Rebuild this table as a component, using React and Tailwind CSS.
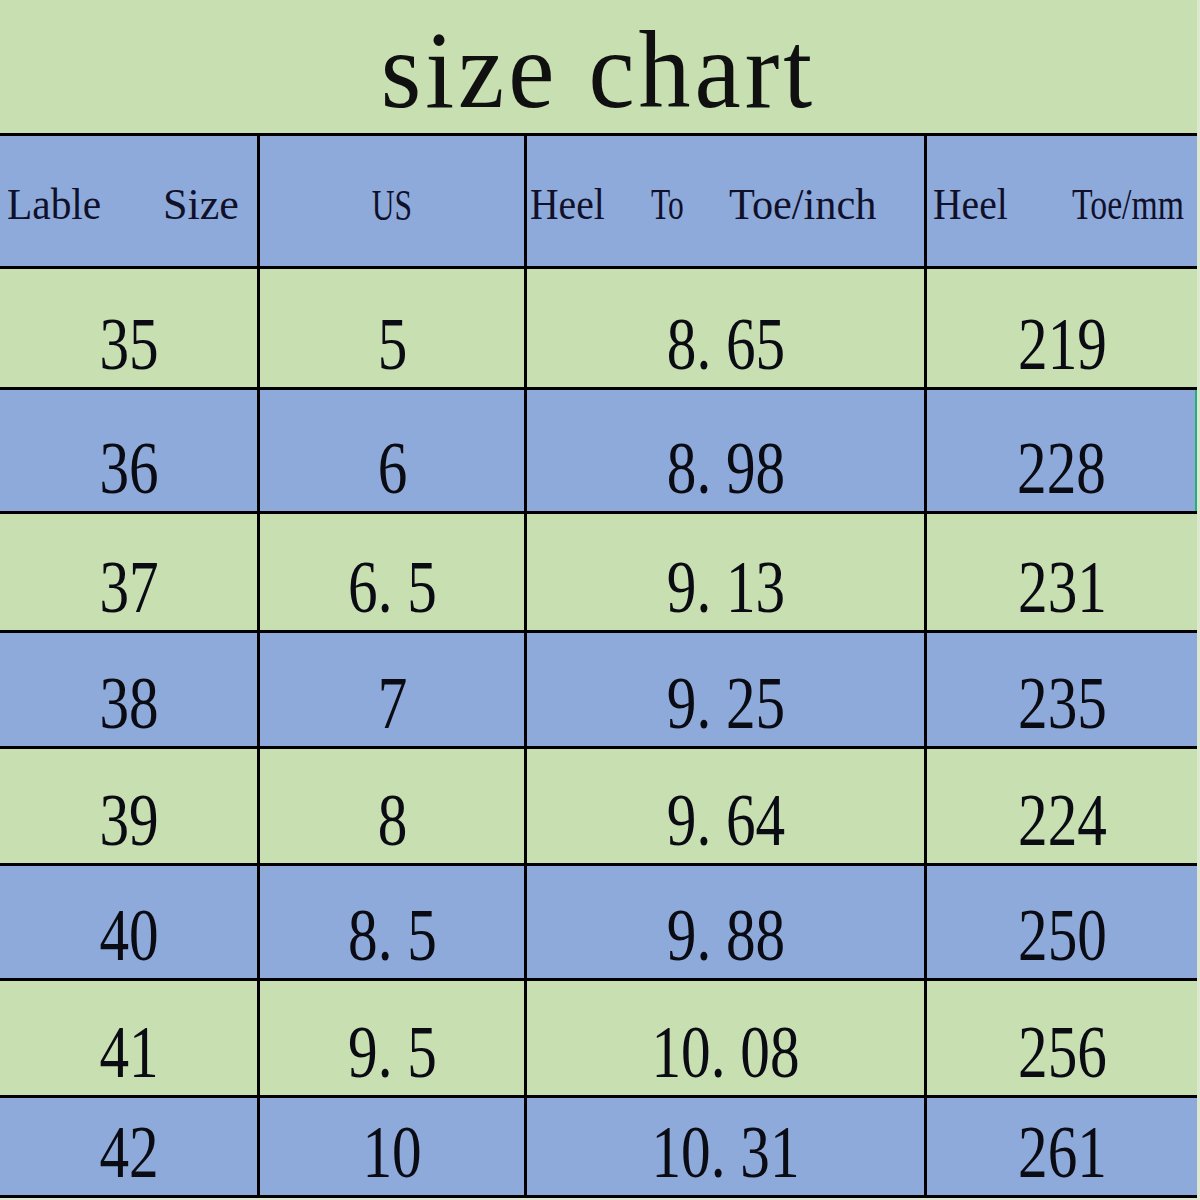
import React from "react";

const rows = [
  ["35", "5", "8.65", "219", 121],
  ["36", "6", "8.98", "228", 124],
  ["37", "6.5", "9.13", "231", 119],
  ["38", "7", "9.25", "235", 116],
  ["39", "8", "9.64", "224", 117],
  ["40", "8.5", "9.88", "250", 115],
  ["41", "9.5", "10.08", "256", 117],
  ["42", "10", "10.31", "261", 100],
];

const serif = { fontFamily: '"Liberation Serif", "Times New Roman", serif' };

function Num({ value }) {
  const parts = value.split(".");
  return (
    <span className="inline-block leading-none text-[74px] scale-x-[0.8] text-[#0b0b14]" style={serif}>
      {parts[0]}
      {parts.length > 1 && (
        <>
          <span className="inline-block w-[0.5em]">.</span>
          {parts[1]}
        </>
      )}
    </span>
  );
}

function Word({ children, w, s }) {
  return (
    <span className={"inline-block shrink-0 " + (w || "")}>
      <span className={"inline-block origin-left leading-none whitespace-nowrap " + (s || "scale-x-[0.9]")}>{children}</span>
    </span>
  );
}

export default function App() {
  return (
    <div className="w-[1200px] h-[1200px] bg-[#dce8d0] overflow-hidden" style={serif}>
      <div className="w-[1197px]">
        {/* Title */}
        <div className="h-[133px] bg-[#c8dfb2] flex justify-center pt-[18px]">
          <span className="text-[104px] leading-none tracking-[4px] text-[#101010] scale-y-[1.06]">size chart</span>
        </div>

        {/* Header */}
        <div className="grid grid-cols-[257px_267px_400px_1fr] h-[133px] border-t-[3px] border-black bg-[#8eaadb] text-[45px] text-[#10102a]">
          <div className="flex items-center pt-[8px] pl-[7px]">
            <Word w="w-[156px]" s="scale-x-[0.92]">Lable</Word>
            <Word s="scale-x-[0.98]">Size</Word>
          </div>
          <div className="flex items-center justify-center pt-[8px] border-l-[3px] border-black">
            <span className="inline-block leading-none scale-x-[0.7]">US</span>
          </div>
          <div className="flex items-center pt-[8px] pl-[3px] border-l-[3px] border-black">
            <Word w="w-[121px]" s="scale-x-[0.88]">Heel</Word>
            <Word w="w-[78px]" s="scale-x-[0.7]">To</Word>
            <Word s="scale-x-[0.94]">Toe/inch</Word>
          </div>
          <div className="flex items-center pt-[8px] pl-[6px] border-l-[3px] border-black">
            <Word w="w-[139px]" s="scale-x-[0.88]">Heel</Word>
            <Word s="scale-x-[0.75]">Toe/mm</Word>
          </div>
        </div>

        {/* Rows */}
        {rows.map((r, i) => {
          const bg = i % 2 === 0 ? "bg-[#c8dfb2]" : "bg-[#8eaadb]";
          return (
            <div
              key={r[0]}
              className={"grid grid-cols-[257px_267px_400px_1fr] border-t-[3px] border-black " + bg}
              style={{ height: r[4] }}
            >
              <div className="flex items-end justify-center pb-[6px]">
                <Num value={r[0]} />
              </div>
              <div className="flex items-end justify-center pb-[6px] border-l-[3px] border-black">
                <Num value={r[1]} />
              </div>
              <div className="flex items-end justify-center pb-[6px] border-l-[3px] border-black">
                <Num value={r[2]} />
              </div>
              <div
                className={
                  "flex items-end justify-center pb-[6px] border-l-[3px] border-black " +
                  (i === 1 ? "border-r-2 border-r-[#22b07a]" : "")
                }
              >
                <Num value={r[3]} />
              </div>
            </div>
          );
        })}
        <div className="h-[3px] bg-black" />
      </div>
    </div>
  );
}
